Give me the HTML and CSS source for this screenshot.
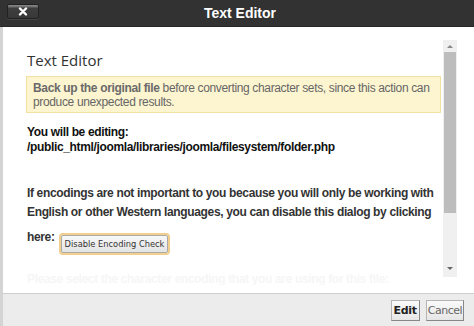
FILE: index.html
```html
<!DOCTYPE html>
<html>
<head>
    <title>Text Editor</title>
    <meta charset="utf-8">
    <link rel="stylesheet" href="styles.css">
</head>
<body>
    <div class="dialog">
        <div class="titlebar">
            <span class="close-btn">
                <svg width="10" height="9" viewBox="0 0 10 9"><path d="M2 1.5 L8 7.5 M8 1.5 L2 7.5" stroke="#fff" stroke-width="2.4" stroke-linecap="round"/></svg>
            </span>
            <header>Text Editor</header>
        </div>
        <div class="dialog-body">
            <div class="scroll-content">
                <h2>Text Editor</h2>
                <div class="warning">
                    <strong>Back up the original file</strong> before converting character sets, since this action can<br>produce unexpected results.
                </div>
                <p class="editing">You will be editing:<br>/public_html/joomla/libraries/joomla/filesystem/folder.php</p>
                <p class="info">If encodings are not important to you because you will only be working with<br>English or other Western languages, you can disable this dialog by clicking</p>
                <div class="here-row">
                    <span class="info-text">here:</span>
                    <button class="small-btn">Disable Encoding Check</button>
                </div>
                <p class="info faded">Please select the character encoding that you are using for this file:</p>
            </div>
            <div class="scrollbar">
                <span class="arrow up"></span>
                <span class="thumb"></span>
                <span class="track"></span>
                <span class="arrow down"></span>
            </div>
        </div>
        <div class="footer">
            <button class="btn btn-bold">Edit</button>
            <button class="btn btn-cancel">Cancel</button>
        </div>
    </div>
</body>
</html>
```

FILE: styles.css
```css
*{
    box-sizing: border-box;
}

body{
    margin: 0;
    background: #fff;
    font-family: "Liberation Sans", Arial, sans-serif;
}

.dialog{
    display: flex;
    flex-direction: column;
    width: 474px;
    height: 326px;
}

.titlebar{
    display: flex;
    align-items: center;
    justify-content: center;
    position: relative;
    height: 27px;
    background: #323232;
    border-bottom: 1px solid #262626;
}

.titlebar header{
    color: #fff;
    font-weight: bold;
    font-size: 14px;
    margin-left: 6px;
}

.close-btn{
    position: absolute;
    left: 7px;
    top: 4px;
    width: 32px;
    height: 15px;
    display: flex;
    align-items: center;
    justify-content: center;
    background: linear-gradient(#8a8a8a 0, #6a6a6a 2px, #3e3e3e 3px, #383838 100%);
    border: 1px solid #222;
    border-radius: 2px;
    box-shadow: 0 1px 0 #444;
}

.dialog-body{
    flex: 1;
    display: flex;
    border-left: 3px solid #d4d4d4;
    padding: 13px 17px 8px 23px;
    overflow: hidden;
}

.scroll-content{
    flex: 1;
    overflow: hidden;
    padding-top: 10px;
    margin-right: 2px;
    letter-spacing: -0.35px;
    white-space: nowrap;
}

.scroll-content h2{
    margin: 0 0 6px 1px;
    font-family: "Open Sans", sans-serif;
    font-weight: normal;
    font-size: 15px;
    letter-spacing: 0;
    color: #333;
}

.warning{
    background: #fdf5d0;
    border: 1px solid #f1e2a2;
    padding: 4px 3px 3px 6px;
    font-size: 12px;
    line-height: 14px;
    color: #666;
}

.warning strong{
    color: #6a6a6a;
}

.editing{
    margin: 12px 0 0 1px;
    font-size: 12px;
    font-weight: bold;
    line-height: 15px;
    color: #111;
}

.info{
    margin: 29px 0 0 1px;
    font-size: 12px;
    font-weight: bold;
    line-height: 19px;
    color: #333;
}

.here-row{
    display: flex;
    align-items: flex-start;
    gap: 6px;
    margin: 8px 0 0 1px;
}

.info-text{
    font-size: 12px;
    font-weight: bold;
    line-height: 14px;
    color: #333;
}

.info.faded{
    margin-top: 17px;
    color: #f6f6f6;
}

.small-btn{
    font-family: "DejaVu Sans", Verdana, sans-serif;
    font-size: 8.3px;
    letter-spacing: 0;
    color: #333;
    padding: 3px 3px;
    margin-top: 5px;
    background: linear-gradient(#f8f8f8, #e4e4e4);
    border: 1px solid #aaa;
    border-radius: 2px;
    box-shadow: 0 0 0 2px #f2cf8c;
}

.scrollbar{
    display: flex;
    flex-direction: column;
    width: 14px;
    margin-bottom: 8px;
    background: #f0f0f0;
}

.scrollbar .arrow{
    height: 12px;
    display: flex;
    align-items: center;
    justify-content: center;
}

.scrollbar .arrow.up::after{
    content: "";
    border-left: 3px solid transparent;
    border-right: 3px solid transparent;
    border-bottom: 3px solid #888;
}

.scrollbar .arrow.down{
    height: 17px;
}

.scrollbar .arrow.down::after{
    content: "";
    border-left: 3px solid transparent;
    border-right: 3px solid transparent;
    border-top: 3px solid #666;
}

.scrollbar .thumb{
    height: 161px;
    margin: 0 1px;
    background: #bdbdbd;
}

.scrollbar .track{
    flex: 1;
}

.footer{
    display: flex;
    justify-content: flex-end;
    align-items: center;
    gap: 6px;
    height: 33px;
    padding-right: 10px;
    background: #ececec;
    border-top: 1px solid #cfcfcf;
    border-left: 3px solid #d4d4d4;
}

.btn{
    font-family: "DejaVu Sans", Verdana, sans-serif;
    font-size: 11px;
    letter-spacing: -0.3px;
    color: #666;
    padding: 3px 2px;
    background: linear-gradient(#fafafa, #e6e6e6);
    border: 1px solid #b5b5b5;
    border-right-color: #888;
    border-bottom-color: #888;
}

.btn-bold{
    font-weight: bold;
    color: #222;
}

.btn-cancel{
    padding: 3px 1px;
    letter-spacing: -0.5px;
}
```
